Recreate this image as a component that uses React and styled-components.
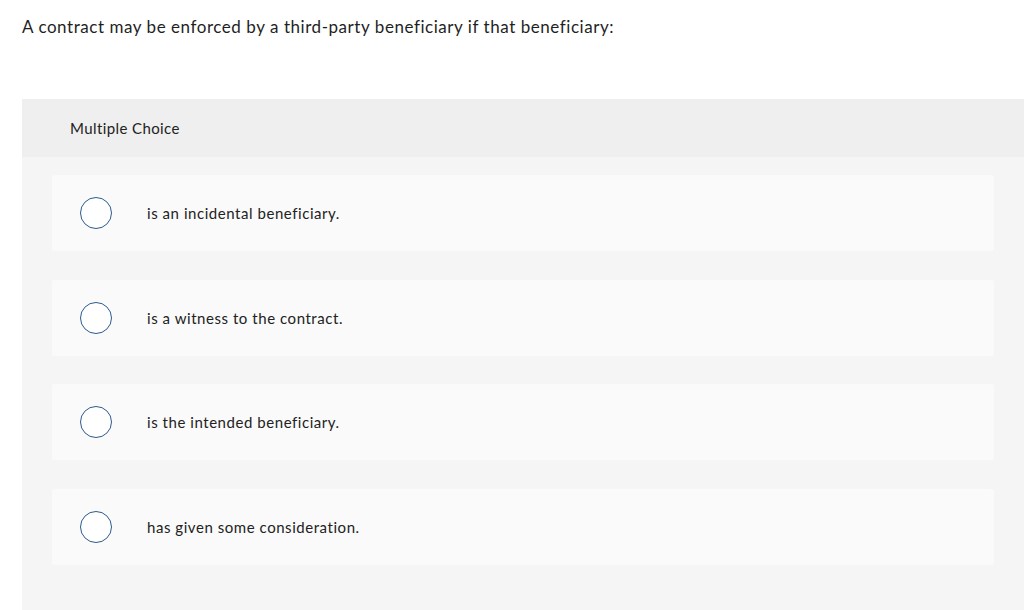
import styled, { createGlobalStyle } from "styled-components";

const GlobalStyle = createGlobalStyle`
  html, body {
    margin: 0;
    padding: 0;
    background: #fff;
  }
  body {
    font-family: Lato, "Liberation Sans", sans-serif;
    color: #222;
  }
`;

const options = [
  "is an incidental beneficiary.",
  "is a witness to the contract.",
  "is the intended beneficiary.",
  "has given some consideration.",
];

const App = () => {
  return (
    <>
      <GlobalStyle />
      <Page>
        <Question>
          A contract may be enforced by a third-party beneficiary if that beneficiary:
        </Question>
        <Panel>
          <PanelHeader>Multiple Choice</PanelHeader>
          <Choices>
            {options.map((text) => (
              <Choice key={text}>
                <Radio />
                <ChoiceText>{text}</ChoiceText>
              </Choice>
            ))}
          </Choices>
        </Panel>
      </Page>
    </>
  );
};

const Page = styled.main`
  padding: 16px 0 0 22px;
`;

const Question = styled.p`
  margin: 0;
  font-size: 17px;
  line-height: 22px;
  letter-spacing: 0.55px;
  color: #1f1f1f;
`;

const Panel = styled.section`
  margin-top: 61px;
  background: #f5f5f5;
  padding-bottom: 60px;
`;

const PanelHeader = styled.div`
  background: #efefef;
  height: 58px;
  display: flex;
  align-items: center;
  padding-left: 48px;
  font-size: 15px;
  letter-spacing: 0.4px;
  color: #222;
`;

const Choices = styled.div`
  display: flex;
  flex-direction: column;
  gap: 28.6px;
  padding: 18px 30px 0 30px;
`;

const Choice = styled.div`
  height: 76px;
  background: #fafafa;
  border-radius: 3px;
  display: flex;
  align-items: center;
  padding-left: 28px;
`;

const Radio = styled.span`
  box-sizing: border-box;
  width: 32px;
  height: 32px;
  border-radius: 50%;
  border: 1.5px solid #2d5a8e;
  background: #fff;
  flex-shrink: 0;
`;

const ChoiceText = styled.span`
  margin-left: 35px;
  font-size: 15px;
  letter-spacing: 0.55px;
  color: #222;
`;

export default App;
